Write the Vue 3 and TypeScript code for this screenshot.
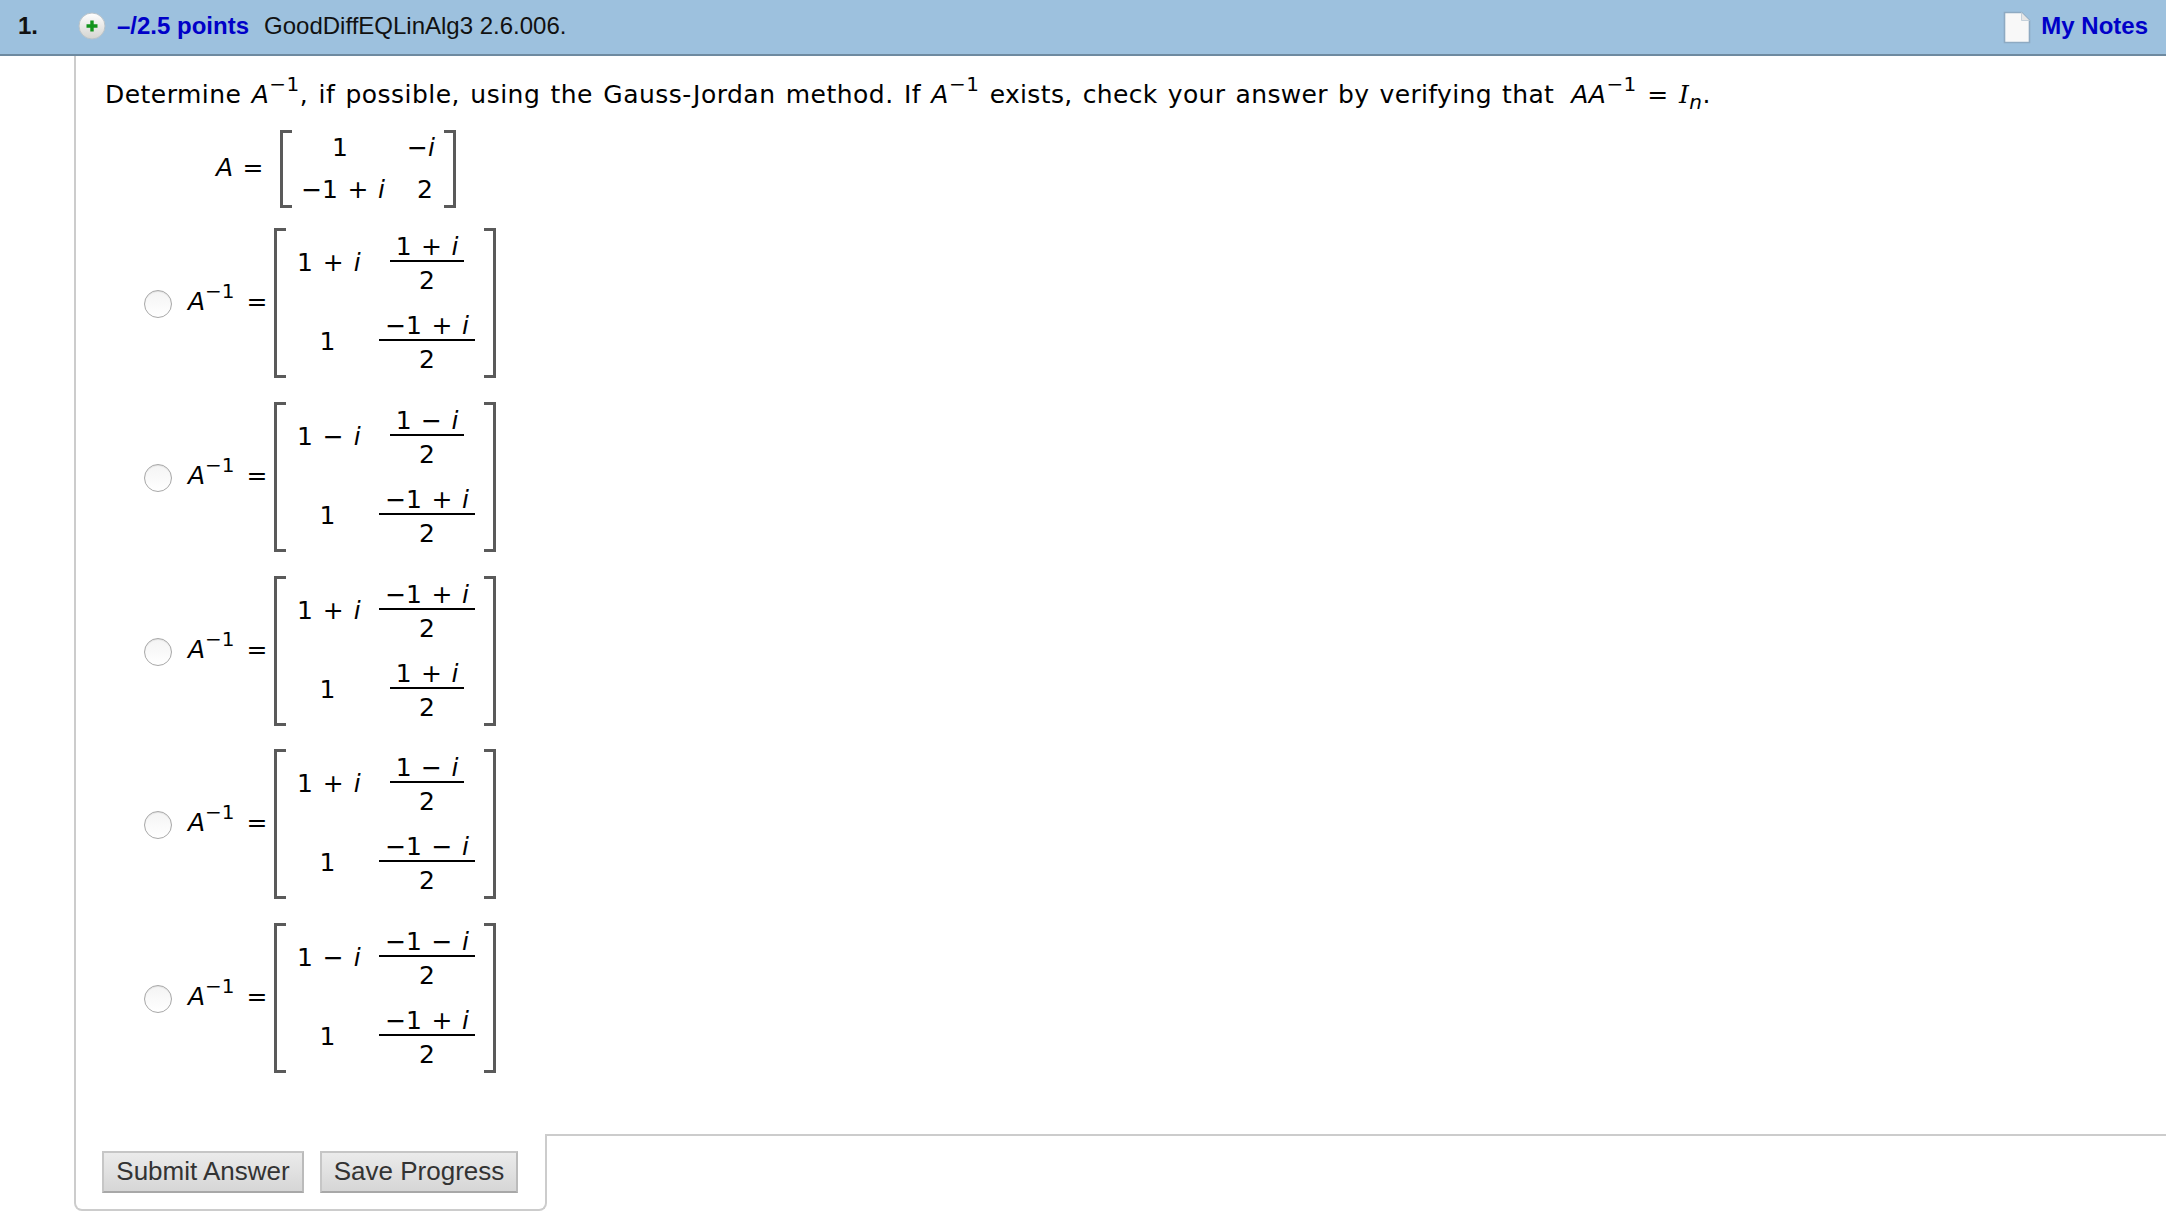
<script setup lang="ts">
interface Choice {
  a: string
  b: string
  d: string
}

const choices: Choice[] = [
  { a: '1 + ', b: '1 + ', d: '−1 + ' },
  { a: '1 − ', b: '1 − ', d: '−1 + ' },
  { a: '1 + ', b: '−1 + ', d: '1 + ' },
  { a: '1 + ', b: '1 − ', d: '−1 − ' },
  { a: '1 − ', b: '−1 − ', d: '−1 + ' },
]
</script>

<template>
  <div class="page">
    <header class="bar">
      <span class="num">1.</span>
      <svg class="plus" width="28" height="28" viewBox="0 0 28 28">
        <defs>
          <linearGradient id="plusfill" x1="0" y1="0" x2="0" y2="1">
            <stop offset="0" stop-color="#ffffff" />
            <stop offset="1" stop-color="#d4d4d0" />
          </linearGradient>
        </defs>
        <circle cx="14" cy="14" r="13" fill="url(#plusfill)" stroke="#b9c3c9" stroke-width="1" />
        <path d="M14 8.5v11M8.5 14h11" stroke="#12941c" stroke-width="3.4" fill="none" />
      </svg>
      <span class="points">–/2.5 points</span>
      <span class="ref">GoodDiffEQLinAlg3 2.6.006.</span>
      <span class="spacer"></span>
      <svg class="doc" width="28" height="33" viewBox="0 0 28 33">
        <path d="M1.5 1.5h17l8 8v22h-25z" fill="#f8f8f8" stroke="#8eaac2" stroke-width="1.6" />
        <path d="M18.5 1.5v8h8" fill="#e6e6e6" stroke="#c4d0da" stroke-width="1" />
      </svg>
      <span class="notes">My Notes</span>
    </header>

    <main class="content">
      <p class="question">
        Determine <i>A</i><sup>−1</sup>, if possible, using the Gauss-Jordan method. If
        <i>A</i><sup>−1</sup> <span class="tight">exists, check your answer by verifying that</span>
        <span class="eqn"><i>AA</i><sup>−1</sup> = <i class="identity">I</i><sub><i>n</i></sub>.</span>
      </p>

      <div class="given">
        <span class="lhs"><i>A</i> =</span>
        <div class="matrix">
          <span class="br left"></span>
          <div class="small-grid">
            <span class="cell nudge-left">1</span>
            <span class="cell">−<i>i</i></span>
            <span class="cell">−1 + <i>i</i></span>
            <span class="cell nudge-right">2</span>
          </div>
          <span class="br right"></span>
        </div>
      </div>

      <label v-for="(c, n) in choices" :key="n" class="option">
        <span class="radio"></span>
        <span class="lhs inv"><i>A</i><sup>−1</sup> =</span>
        <div class="matrix">
          <span class="br left"></span>
          <div class="big-grid">
            <span class="cell">{{ c.a }}<i>i</i></span>
            <span class="frac">
              <span class="top">{{ c.b }}<i>i</i></span>
              <span class="bottom">2</span>
            </span>
            <span class="cell">1</span>
            <span class="frac">
              <span class="top">{{ c.d }}<i>i</i></span>
              <span class="bottom">2</span>
            </span>
          </div>
          <span class="br right"></span>
        </div>
      </label>
    </main>

    <footer class="footer">
      <div class="actions">
        <button class="btn submit" type="button">Submit Answer</button>
        <button class="btn save" type="button">Save Progress</button>
      </div>
      <div class="rest"></div>
    </footer>
  </div>
</template>

<style>
html,
body {
  margin: 0;
  background: #fff;
}
</style>

<style scoped>
.page {
  width: 2166px;
  height: 1228px;
  overflow: hidden;
  background: #fff;
  color: #000;
  font-family: "DejaVu Sans", Verdana, sans-serif;
  font-size: 25px;
}

.bar {
  height: 54px;
  box-sizing: content-box;
  border-bottom: 2px solid #6e8aa0;
  background: #9dc1de;
  display: flex;
  align-items: center;
  font-family: "Liberation Sans", Arial, sans-serif;
  font-size: 24px;
  padding: 0 18px;
}

.bar > span {
  position: relative;
  top: -1px;
}

.num {
  width: 60px;
  font-weight: 700;
  color: #111;
}

.plus {
  flex: none;
  margin: -2px 11px 0 0;
}

.points {
  font-weight: 700;
  color: #0000c8;
  margin-right: 15px;
}

.ref {
  color: #111;
}

.spacer {
  flex: 1;
}

.doc {
  flex: none;
  margin-right: 10px;
}

.notes {
  font-weight: 700;
  color: #0000c8;
}

.content {
  margin-left: 74px;
  border-left: 2px solid #cccccc;
  height: 1078px;
  box-sizing: border-box;
  padding-top: 21px;
}

.question {
  margin: 0 0 0 29px;
  line-height: 36px;
  height: 53px;
  white-space: nowrap;
  letter-spacing: 0.47px;
  word-spacing: 1.9px;
}

.tight {
  letter-spacing: 0.34px;
}

.eqn {
  margin-left: 17px;
}

.identity {
  font-family: "DejaVu Serif", serif;
}

sup,
sub {
  font-size: 0.8em;
  line-height: 0;
}

sup {
  vertical-align: 0.6em;
}

sub {
  vertical-align: -0.32em;
}

.given {
  display: flex;
  align-items: center;
  padding-left: 140px;
  height: 78px;
}

.lhs {
  white-space: nowrap;
  padding-bottom: 3px;
  word-spacing: 1.5px;
}

.given .lhs {
  width: 64px;
}

.matrix {
  display: flex;
  align-items: stretch;
}

.br {
  width: 9px;
  border: 3px solid #5a5a5a;
}

.left {
  border-right: none;
}

.right {
  border-left: none;
}

.small-grid {
  display: grid;
  grid-template-columns: 86px 30px;
  column-gap: 20px;
  row-gap: 12px;
  padding: 3px 8px 3px 8px;
  line-height: 30px;
}

.cell {
  text-align: center;
  white-space: pre;
  align-self: center;
  word-spacing: 1.5px;
}

.nudge-left {
  padding-right: 6px;
}

.nudge-right {
  padding-left: 8px;
}

.option {
  display: flex;
  align-items: center;
  margin-top: 23.75px;
  padding-left: 68px;
}

.given + .option {
  margin-top: 20px;
}

.radio {
  width: 26px;
  height: 26px;
  margin-top: 2px;
  border: 1px solid #a8a8a8;
  border-radius: 50%;
  background: linear-gradient(#f4f4f4, #ffffff);
  flex: none;
  margin-right: 16px;
  box-shadow: inset 0 1px 1px rgba(0, 0, 0, 0.08);
}

.inv {
  width: 86px;
  word-spacing: 4px;
}

.big-grid {
  display: grid;
  grid-template-columns: 63px 98px;
  column-gap: 18px;
  row-gap: 19px;
  padding: 8px 8px 3px 11px;
}

.big-grid .cell {
  align-self: start;
  line-height: 54px;
  word-spacing: 2px;
}

.big-grid .cell:nth-child(3) {
  padding-right: 2px;
}

.frac {
  display: flex;
  flex-direction: column;
  align-items: center;
  text-align: center;
}

.top {
  line-height: 22px;
  height: 24px;
  padding: 0 6px;
  border-bottom: 2px solid #000;
  white-space: pre;
  word-spacing: 1.5px;
}

.bottom {
  line-height: 38px;
  margin-bottom: -4px;
}

.footer {
  display: flex;
  align-items: flex-start;
}

.actions {
  margin-left: 74px;
  width: 473px;
  height: 77px;
  box-sizing: border-box;
  border: 2px solid #cccccc;
  border-top: none;
  border-radius: 0 0 8px 8px;
  padding: 17px 0 0 26px;
  display: flex;
  gap: 16px;
}

.rest {
  flex: 1;
  border-top: 2px solid #cccccc;
}

.btn {
  height: 42px;
  box-sizing: border-box;
  padding: 0 0 2px;
  margin: 0;
  border: 2px solid #c6c6c6;
  border-bottom-color: #a8a8a8;
  border-right-color: #bbb;
  background: linear-gradient(#ebebeb, #d6d6d6);
  color: #333;
  font-family: "Liberation Sans", Arial, sans-serif;
  font-size: 26px;
}

.submit {
  width: 202px;
}

.save {
  width: 198px;
}
</style>
